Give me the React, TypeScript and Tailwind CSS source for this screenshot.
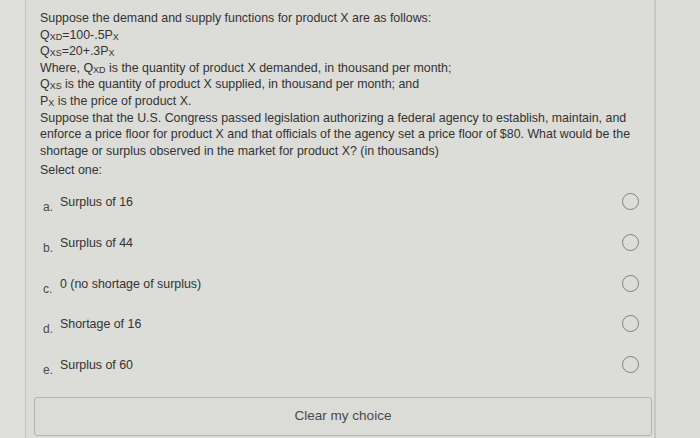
import React from 'react'

const options = [
  { letter: 'a.', text: 'Surplus of 16' },
  { letter: 'b.', text: 'Surplus of 44' },
  { letter: 'c.', text: '0 (no shortage of surplus)' },
  { letter: 'd.', text: 'Shortage of 16' },
  { letter: 'e.', text: 'Surplus of 60' },
]

function Sub({ children }: { children: React.ReactNode }) {
  return <sub className="text-[9px] relative top-[1px] align-baseline">{children}</sub>
}

export default function App() {
  return (
    <div
      className="w-[700px] h-[438px] overflow-hidden bg-[#dcdcd8] flex text-[#333]"
      style={{ fontFamily: '"Liberation Sans", Arial, sans-serif' }}
    >
      <div className="w-[26px] shrink-0 border-r border-[#c4c4c0] bg-[#dededa]" />
      <div className="w-[630px] shrink-0 border-r-2 border-[#c6c6c2] flex flex-col pl-[14px] pr-[4px] pt-[10px]">
        <div className="text-[12.4px] leading-[16.6px]">
          <p>Suppose the demand and supply functions for product X are as follows:</p>
          <p>Q<Sub>XD</Sub>=100-.5P<Sub>X</Sub></p>
          <p>Q<Sub>XS</Sub>=20+.3P<Sub>X</Sub></p>
          <p>Where, Q<Sub>XD</Sub> is the quantity of product X demanded, in thousand per month;</p>
          <p>Q<Sub>XS</Sub> is the quantity of product X supplied, in thousand per month; and</p>
          <p>P<Sub>X</Sub> is the price of product X.</p>
          <p>
            Suppose that the U.S. Congress passed legislation authorizing a federal agency to establish, maintain, and
            enforce a price floor for product X and that officials of the agency set a price floor of $80. What would be the
            shortage or surplus observed in the market for product X? (in thousands)
          </p>
          <p className="mt-[3px]">Select one:</p>
        </div>
        <div className="mt-[14px] flex flex-col">
          {options.map((o) => (
            <div key={o.letter} className="h-[40.8px] flex items-start pl-[3px] pr-[11px]">
              <span className="w-[17px] text-[12px] mt-[5px] text-[#4a4a4a]">{o.letter}</span>
              <span className="text-[12.4px]">{o.text}</span>
              <span className="ml-auto w-[17px] h-[17px] rounded-full border-[1.5px] border-[#808080]" />
            </div>
          ))}
        </div>
        <div className="ml-[-6px] w-[618px] h-[39px] border border-[#b2b2ae] rounded-[3px] flex items-center justify-center text-[13.5px] text-[#4a4a4a] bg-[#dbdbd7]">
          Clear my choice
        </div>
      </div>
      <div className="flex-1 bg-[#dbdbd7]" />
    </div>
  )
}
